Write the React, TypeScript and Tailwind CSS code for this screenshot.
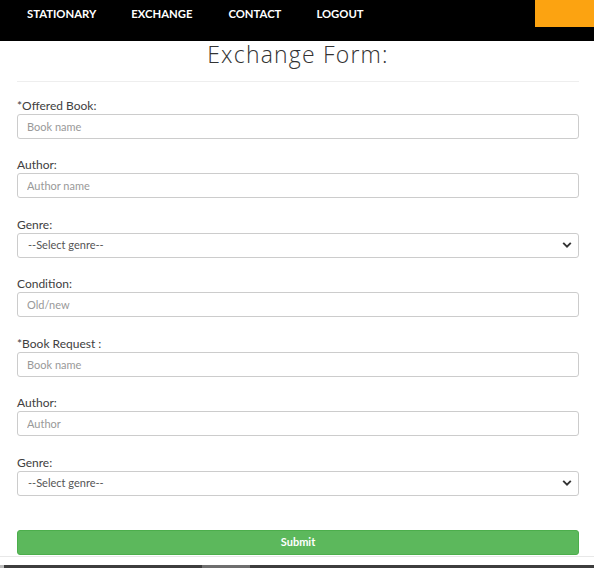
import React from "react";

const Chevron = () => (
  <svg
    className="pointer-events-none absolute right-[7px] top-1/2 -translate-y-1/2"
    width="10"
    height="7"
    viewBox="0 0 10 7"
  >
    <path d="M1.2 1.4 L5 5.2 L8.8 1.4" fill="none" stroke="#333" strokeWidth="1.9" />
  </svg>
);

const Field = ({ label, placeholder }: { label: string; placeholder: string }) => (
  <div className="mb-[17.5px]">
    <label className="block text-[12px] leading-[17px] text-[#404040]">{label}</label>
    <input
      className="block h-[25px] w-full rounded-[3px] border border-[#ccc] bg-white px-[9px] text-[11px] text-[#555] placeholder:text-[#999] outline-none"
      placeholder={placeholder}
    />
  </div>
);

const SelectField = ({ label, last }: { label: string; last?: boolean }) => (
  <div className={last ? "mb-[34px]" : "mb-[17.5px]"}>
    <label className="block text-[12px] leading-[17px] text-[#404040]">{label}</label>
    <div className="relative">
      <select className="block h-[25px] w-full appearance-none rounded-[3px] border border-[#ccc] bg-white pl-[10px] text-[11px] text-[#555] outline-none">
        <option>--Select genre--</option>
      </select>
      <Chevron />
    </div>
  </div>
);

export default function App() {
  return (
    <div
      className="flex h-[568px] w-full flex-col overflow-hidden bg-white"
      style={{ fontFamily: "Lato, 'Open Sans', sans-serif" }}
    >
      <header className="flex h-[41px] shrink-0 items-start bg-black">
        <nav className="flex flex-1 items-center pl-[27px] pt-[7px] text-[11.3px] font-bold leading-[14px] text-white">
          <span className="mr-[35px]">STATIONARY</span>
          <span className="mr-[36px]">EXCHANGE</span>
          <span className="mr-[35px]">CONTACT</span>
          <span>LOGOUT</span>
        </nav>
        <div className="h-[27px] w-[59px] bg-[#fca311]" />
      </header>
      <main className="flex-1 pl-[17px] pr-[15px]">
        <h1
          className="text-center text-[23px] font-light leading-[26px] tracking-[1.2px] text-[#333]"
          style={{ fontFamily: "'Open Sans', sans-serif" }}
        >
          Exchange Form:
        </h1>
        <hr className="mt-[14px] mb-[14.5px] border-t border-[#eee]" />
        <form>
          <Field label="*Offered Book:" placeholder="Book name" />
          <Field label="Author:" placeholder="Author name" />
          <SelectField label="Genre:" />
          <Field label="Condition:" placeholder="Old/new" />
          <Field label="*Book Request :" placeholder="Book name" />
          <Field label="Author:" placeholder="Author" />
          <SelectField label="Genre:" last />
          <button
            type="button"
            className="block h-[25px] w-full rounded-[3px] border border-[#4cae4c] bg-[#5cb85c] text-[11px] font-bold text-white"
          >
            Submit
          </button>
        </form>
      </main>
      <div className="h-px shrink-0 bg-[#e8e8e8]" />
      <div className="h-[8px] shrink-0 bg-white" />
      <div className="flex h-[3px] shrink-0 bg-[#3d3d3d]">
        <div className="w-[4px] bg-[#bbb]" />
        <div className="w-[198px]" />
        <div className="w-[48px] bg-[#6e6e6e]" />
      </div>
    </div>
  );
}
